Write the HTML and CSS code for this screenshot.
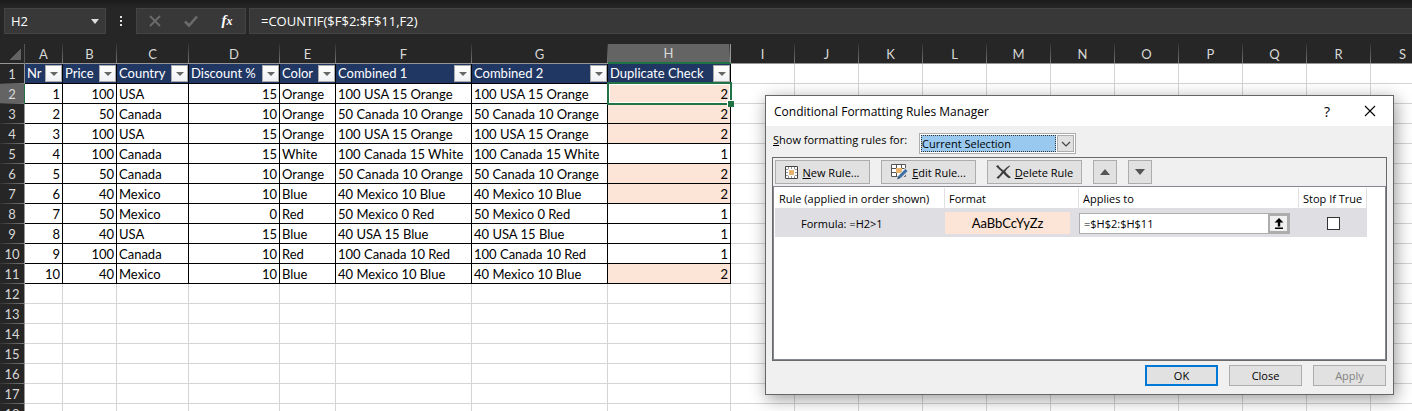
FILE: index.html
```html
<!DOCTYPE html>
<html lang="en">
<head>
    <meta charset="UTF-8" />
    <title>Duplicate Check</title>
    <link rel="stylesheet" href="styles.css">
</head>
<body>
<div class="formula-bar">
    <div class="name-box">
        <input type="text" id="nameBox" aria-label="Name box" value="H2" />
        <span class="caret"></span>
    </div>
    <div class="dots"><i></i><i></i><i></i></div>
    <div class="formula-actions">
        <button type="button" aria-label="Cancel">
            <svg width="14" height="14" viewBox="0 0 14 14"><path d="M2 2l10 10M12 2L2 12" fill="none" stroke="#6b6b6b" stroke-width="1.8" /></svg>
        </button>
        <button type="button" aria-label="Enter">
            <svg width="14" height="14" viewBox="0 0 14 14"><path d="M1 7.500l4 4L13 2.500" fill="none" stroke="#6b6b6b" stroke-width="2.600" /></svg>
        </button>
        <button type="button" class="fx" aria-label="Insert function">f<small>x</small></button>
    </div>
    <input type="text" class="formula" aria-label="Formula" value="=COUNTIF($F$2:$F$11,F2)" />
</div>

<div class="sheet-wrap">
    <table class="sheet" id="sheet"></table>
</div>

<div class="dialog" role="dialog" aria-labelledby="dialogTitle">
    <div class="dialog-title">
        <span id="dialogTitle">Conditional Formatting Rules Manager</span>
        <div class="dialog-controls">
            <button type="button" aria-label="Help">?</button>
            <button type="button" aria-label="Close dialog">
                <svg width="12" height="12" viewBox="0 0 12 12"><path d="M1 1l10 10M11 1L1 11" fill="none" stroke="#000" stroke-width="1.1" /></svg>
            </button>
        </div>
    </div>
    <div class="scope">
        <label for="scope"><u>S</u>how formatting rules for:</label>
        <div class="select">
            <select id="scope">
                <option>Current Selection</option>
                <option>This Worksheet</option>
            </select>
            <span class="select-arrow">
                <svg width="10" height="6" viewBox="0 0 10 6"><path d="M1 1l4 4 4-4" fill="none" stroke="#444" stroke-width="1.2" /></svg>
            </span>
        </div>
    </div>

    <div class="rules">
        <div class="rules-toolbar">
            <button type="button" class="btn tool">
                <svg width="13" height="13" viewBox="0 0 13 13">
                    <path fill="#fff" d="M0 0h13v13H0z" />
                    <path d="M3.500 1v11M6.500 1v11M9.500 1v11M1 3.500h11M1 6.500h11M1 9.500h11" fill="none" stroke="#999" />
                    <path d="M.5.5h12v12H.5z" fill="none" stroke="#444" />
                    <path fill="#e8b36a" stroke="#fff" d="M3.500 3.500h6v6h-6z" />
                </svg>
                <span><u>N</u>ew Rule...</span>
            </button>
            <button type="button" class="btn tool">
                <svg width="17" height="16" viewBox="0 0 17 16">
                    <path fill="#fff" d="M0 0h15v13H0z" />
                    <path d="M.5.5h14v12H.5zM.5 4.500h14M.5 8.500h14M5.500.5v12M10.500.5v12" fill="none" stroke="#555" />
                    <path fill="#e8b36a" d="M5 4h6v5H5z" />
                    <path d="M16 5.500L8 14.500" stroke="#e1e1e1" stroke-width="5" />
                    <path d="M15.500 6L9 12.500" stroke="#3a6ea5" stroke-width="3" />
                    <path fill="#1f4e79" d="M7.700 11.500l2.300 2.200L6 15.500z" />
                </svg>
                <span><u>E</u>dit Rule...</span>
            </button>
            <button type="button" class="btn tool">
                <svg width="15" height="14" viewBox="0 0 15 14"><path d="M0 1.200L2 0C4 3 6 4.500 7.500 5.400 9.500 3.500 11.500 1.500 13.500.5L14.200 1C12 3 10.300 4.800 9.200 6.600 10.500 8.500 12 10.300 15 12.200L13 13.300C10.800 12 9 10.200 7.500 8.300 5.500 10.500 4 12.200 2.300 14L.5 12.600C2.500 11 4.400 9 6 6.800 4 5 2 3.500 0 1.200z" fill="#3c3c3c" /></svg>
                <span><u>D</u>elete Rule</span>
            </button>
            <button type="button" class="btn move" aria-label="Move up"><span class="tri up"></span></button>
            <button type="button" class="btn move" aria-label="Move down"><span class="tri down"></span></button>
        </div>
        <div class="rules-list">
            <table>
                <colgroup>
                    <col class="c-rule"><col class="c-format"><col class="c-applies"><col class="c-stop">
                </colgroup>
                <thead>
                    <tr><th>Rule (applied in order shown)</th><th>Format</th><th>Applies to</th><th>Stop If True</th></tr>
                </thead>
                <tbody>
                    <tr>
                        <td class="rule-name">Formula: =H2&gt;1</td>
                        <td><div class="swatch">AaBbCcYyZz</div></td>
                        <td>
                            <div class="range">
                                <input type="text" aria-label="Applies to" value="=$H$2:$H$11" />
                                <button type="button" aria-label="Collapse dialog">
                                    <svg width="10" height="11" viewBox="0 0 10 11"><path d="M5 0l4.500 4.500H6.200V8.500H3.800V4.500H.5zM1 9.500h8V11H1z" fill="#000" /></svg>
                                </button>
                            </div>
                        </td>
                        <td class="stop"><input type="checkbox" aria-label="Stop If True" /></td>
                    </tr>
                </tbody>
            </table>
        </div>
    </div>

    <div class="dialog-footer">
        <button type="button" class="btn primary">OK</button>
        <button type="button" class="btn">Close</button>
        <button type="button" class="btn" disabled>Apply</button>
    </div>
</div>
<script src="sheet.js"></script>
</body>
</html>
```

FILE: sheet.js
```js
var letters = 'ABCDEFGHIJKLMNOPQRS'.split('');
var widths = [38, 54, 72, 91, 56, 136, 136, 123];
var headers = ['Nr', 'Price', 'Country', 'Discount %', 'Color', 'Combined 1', 'Combined 2', 'Duplicate Check'];
var items = [
    [100, 'USA', 15, 'Orange'],
    [50, 'Canada', 10, 'Orange'],
    [100, 'USA', 15, 'Orange'],
    [100, 'Canada', 15, 'White'],
    [50, 'Canada', 10, 'Orange'],
    [40, 'Mexico', 10, 'Blue'],
    [50, 'Mexico', 0, 'Red'],
    [40, 'USA', 15, 'Blue'],
    [100, 'Canada', 10, 'Red'],
    [40, 'Mexico', 10, 'Blue']
];
var checks = [2, 2, 2, 1, 2, 2, 1, 1, 1, 2];
var lastRow = 18;

function cell(value, row, col) {
    var cls = ['data'];
    if (typeof value === 'number') cls.push('num');
    if (col === 7 && value > 1) cls.push('dup');
    var active = row === 2 && col === 7;
    if (active) cls.push('active');
    return '<td class="' + cls.join(' ') + '">' + value + (active ? '<span class="cursor"></span>' : '') + '</td>';
}

var html = '<colgroup><col style="width:25px">';
letters.forEach(function (l, i) {
    html += '<col style="width:' + (widths[i] || 64) + 'px">';
});
html += '</colgroup><thead><tr><th class="corner"></th>';
letters.forEach(function (l) {
    html += '<th class="col' + (l === 'H' ? ' selected' : '') + '">' + l + '</th>';
});
html += '</tr></thead><tbody>';

for (var row = 1; row <= lastRow; row++) {
    html += '<tr><th class="row' + (row === 2 ? ' selected' : '') + '">' + row + '</th>';
    var item = items[row - 2];
    var values = [];
    if (item) {
        var combined = item.join(' ');
        values = [row - 1].concat(item, combined, combined, checks[row - 2]);
    }
    for (var col = 0; col < letters.length; col++) {
        if (row === 1 && headers[col]) {
            html += '<td class="head"><div>' + headers[col] + '<button type="button" aria-label="Filter ' + headers[col] + '"></button></div></td>';
        } else if (values[col] !== undefined) {
            html += cell(values[col], row, col);
        } else {
            html += '<td></td>';
        }
    }
    html += '</tr>';
}
document.getElementById('sheet').innerHTML = html + '</tbody>';
```

FILE: styles.css
```css
* {
    box-sizing: border-box;
}

body {
    margin: 0;
    height: 100vh;
    display: flex;
    flex-direction: column;
    overflow: hidden;
    position: relative;
    background: #fff;
    font-family: Lato, 'Liberation Sans', sans-serif;
    font-size: 13px;
    color: #000;
}

button,
input,
select {
    font: inherit;
    color: inherit;
    margin: 0;
    padding: 0;
    border: none;
    border-radius: 0;
    background: none;
}

svg {
    display: block;
    flex: none;
}

/* Formula bar */
.formula-bar {
    display: flex;
    flex: none;
    padding: 8px 0 10px 4px;
    height: 44px;
    background: linear-gradient(#1c1c1c, #262626 8px);
    color: #fff;
    font-family: 'Open Sans', sans-serif;
}

.name-box,
.formula-actions,
.formula {
    background: #383838;
    border: 1px solid #444;
}

.name-box {
    display: flex;
    align-items: center;
    width: 102px;
    padding: 0 6px;
}

.name-box input {
    flex: 1;
    min-width: 0;
}

.caret {
    border: 4px solid transparent;
    border-top: 5px solid #ddd;
    border-bottom: none;
}

.dots {
    display: flex;
    flex-direction: column;
    justify-content: center;
    align-items: center;
    gap: 2px;
    width: 30px;
}

.dots i {
    width: 2px;
    height: 2px;
    background: #e0e0e0;
}

.formula-actions {
    display: flex;
    width: 110px;
    margin-right: 3px;
}

.formula-actions button {
    flex: 1;
    display: flex;
    align-items: center;
    justify-content: center;
}

.formula-actions .fx {
    font: italic bold 15px 'Liberation Serif', serif;
    align-items: baseline;
    line-height: 22px;
}

.fx small {
    font-size: 12px;
}

.formula {
    flex: 1;
    min-width: 0;
    padding: 0 11px;
    border-right: none;
}

/* Sheet */
.sheet-wrap {
    flex: 1;
    min-height: 0;
    overflow: hidden;
}

.sheet {
    width: 1435px;
    table-layout: fixed;
    border-collapse: separate;
    border-spacing: 0;
}

.sheet th,
.sheet td {
    height: 20px;
    padding: 2px 2px 0;
    line-height: 17px;
    white-space: nowrap;
    border-right: 1px solid #d4d4d4;
    border-bottom: 1px solid #d4d4d4;
}

.sheet th {
    padding: 2px 0 0;
    background: #262626;
    color: #d8d8d8;
    font-weight: normal;
    text-align: center;
}

/* separators fade out towards the outer edge */
.sheet th.col {
    padding-right: 1px;
    border-right: none;
    border-bottom-color: #969696;
    background: linear-gradient(#333, #777) right / 1px 100% no-repeat #262626;
}

.sheet th.row {
    padding-bottom: 1px;
    line-height: 17px;
    border-right-color: #969696;
    border-bottom: none;
    background: linear-gradient(90deg, #333, #777) bottom / 100% 1px no-repeat #262626;
}

.sheet th.selected {
    background-color: #646464;
}

.sheet th.col.selected {
    padding-top: 1px;
    border-right: 1px solid #969696;
    border-bottom: 2px solid #217346;
}

.sheet th.row.selected {
    border-right-color: #217346;
}

.sheet th.corner {
    background: linear-gradient(135deg, #262626 50%, #646464 50%) 9px 5px / 12px 11px no-repeat #262626;
    border-right-color: #555;
    border-bottom-color: #969696;
}

.sheet td.head,
.sheet td.data {
    border-color: #000;
}

.sheet td.head {
    padding: 0 0 0 2px;
    background: #203764;
    color: #fff;
}

.head div {
    display: flex;
    align-items: center;
    justify-content: space-between;
    height: 19px;
    line-height: 21px;
}

.head button {
    display: flex;
    flex: none;
    align-items: center;
    justify-content: center;
    width: 17px;
    height: 17px;
    border: 1px solid #ababab;
    background: linear-gradient(#fff, #f0f1f5);
}

.head button::before {
    content: '';
    border: 4px solid transparent;
    border-top: 4px solid #666;
    border-bottom: none;
}

.sheet td.num {
    text-align: right;
}

.sheet td.dup {
    background: #fce4d6;
}

.sheet td.active {
    position: relative;
}

/* Selected cell frame with fill handle */
.cursor {
    position: absolute;
    top: -2px;
    right: -2px;
    bottom: -2px;
    left: -1px;
    border: 2px solid #217346;
    box-shadow: inset 0 0 0 1px #fff;
}

.cursor::after {
    content: '';
    position: absolute;
    right: -4px;
    bottom: -4px;
    width: 6px;
    height: 6px;
    background: #217346;
    border: solid #fff;
    border-width: 1px 0 0 1px;
}

/* Dialog */
.dialog {
    position: absolute;
    top: 95px;
    right: 18px;
    width: 629px;
    padding-bottom: 8px;
    background: #f0f0f0;
    border: 1px solid #666;
    box-shadow: 2px 4px 16px rgba(0, 0, 0, 0.4);
    font-family: 'Open Sans', sans-serif;
    font-size: 11px;
}

.dialog-title {
    display: flex;
    align-items: center;
    justify-content: space-between;
    height: 30px;
    padding: 0 17px 0 8px;
    background: #fff;
    font-size: 12px;
}

.dialog-controls {
    display: flex;
    align-items: center;
    gap: 34px;
    font-size: 14px;
}

.scope {
    display: flex;
    gap: 12px;
    height: 31px;
    padding: 7px 7px 0;
}

.scope label {
    line-height: 14px;
}

.select {
    display: flex;
    width: 157px;
    height: 21px;
    padding: 1px;
    background: #fff;
    border: 1px solid #adadad;
}

.select select {
    flex: 1;
    height: 17px;
    appearance: none;
    line-height: 15px;
    background: #99c9ef;
    border: 1px dotted #333;
}

.select-arrow {
    display: flex;
    align-items: center;
    justify-content: center;
    width: 17px;
    margin-left: 1px;
    background: #e1e1e1;
    border: 1px solid #adadad;
}

.rules {
    margin: 0 6px;
    border: 1px solid #696969;
}

.btn {
    display: flex;
    align-items: center;
    justify-content: center;
    background: #e1e1e1;
    border: 1px solid #adadad;
}

.rules-toolbar {
    display: flex;
    gap: 11px;
    height: 28px;
    padding: 2px;
}

.tool {
    gap: 4px;
    width: 95px;
    height: 24px;
}

.move {
    width: 24px;
    height: 24px;
}

.tri {
    border: 5px solid transparent;
}

.tri.up {
    border-bottom: 6px solid #555;
    border-top: none;
}

.tri.down {
    border-top: 6px solid #555;
    border-bottom: none;
}

.rules-list {
    height: 174px;
    padding: 1px;
    background: #fff;
    border: 1px solid #828790;
}

.rules-list table {
    width: 592px;
    table-layout: fixed;
    border-spacing: 0;
}

.c-rule {
    width: 170px;
}

.c-format {
    width: 134px;
}

.c-applies {
    width: 220px;
}

.rules-list th {
    height: 20px;
    padding: 0 4px;
    font-weight: normal;
    text-align: left;
    white-space: nowrap;
    border-right: 1px solid #e0e0e0;
}

.rules-list td {
    height: 29px;
    padding: 1px 0 0;
    background: #dedee3;
}

.rules-list td.rule-name {
    padding-left: 26px;
}

.swatch {
    width: 125px;
    height: 22px;
    background: #fce4d6;
    font: 13px/22px Lato, sans-serif;
    text-align: center;
}

.range {
    display: flex;
    width: 211px;
    height: 21px;
    background: #fff;
    border: 1px solid #adadad;
}

.range input {
    flex: 1;
    min-width: 0;
    padding-left: 4px;
}

.range button {
    display: flex;
    align-items: center;
    justify-content: center;
    width: 21px;
    background: #f0f0f0;
    border: 2px solid #adadad;
}

.stop input {
    display: block;
    width: 13px;
    height: 13px;
    margin: 0 auto;
    appearance: none;
    background: #fff;
    border: 1px solid #333;
}

.dialog-footer {
    display: flex;
    justify-content: flex-end;
    gap: 11px;
    padding: 4px 7px 0;
}

.dialog-footer .btn {
    width: 73px;
    height: 21px;
}

.dialog-footer .primary {
    border: 2px solid #0078d7;
}

.btn:disabled {
    color: #838383;
}
```
